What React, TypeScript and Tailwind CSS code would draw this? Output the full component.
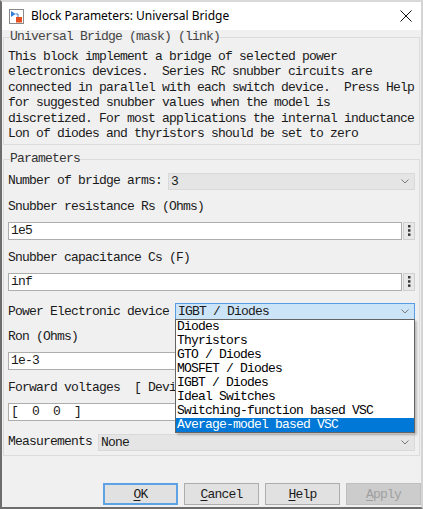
const DEVICES = [
  "Diodes",
  "Thyristors",
  "GTO / Diodes",
  "MOSFET / Diodes",
  "IGBT / Diodes",
  "Ideal Switches",
  "Switching-function based VSC",
  "Average-model based VSC",
];

const DESCRIPTION = [
  "This block implement a bridge of selected power",
  "electronics devices.  Series RC snubber circuits are",
  "connected in parallel with each switch device.  Press Help",
  "for suggested snubber values when the model is",
  "discretized. For most applications the internal inductance",
  "Lon of diodes and thyristors should be set to zero",
];

function Chevron() {
  return (
    <svg width="8" height="5" viewBox="0 0 8 5" className="shrink-0">
      <path d="M0.5 0.5 L4 4 L7.5 0.5" fill="none" stroke="#7a7a7a" strokeWidth="1" />
    </svg>
  );
}

function Combo({ value, focused = false, children }: { value: string; focused?: boolean; children?: React.ReactNode }) {
  return (
    <div
      className={`relative flex h-[17px] flex-1 items-center justify-between border pl-[2px] pr-[5px] ${
        focused ? "border-[#569de5] bg-[#cce4f7]" : "border-[#d9d9d9] bg-[#e5e5e5]"
      }`}
    >
      <span className="leading-[15px]">{value}</span>
      <Chevron />
      {children}
    </div>
  );
}

function Field({ value }: { value: string }) {
  return (
    <div className="mt-[7px] flex h-[18px] gap-[1px]">
      <div className="flex flex-1 items-center border border-[#adadad] bg-white pl-[2px] leading-[16px] whitespace-pre">
        {value}
      </div>
      <div className="flex w-[12px] items-center justify-center border border-[#d0d0d0] bg-[#e8e8e8]">
        <svg width="3" height="11" viewBox="0 0 3 11">
          <rect x="0" y="0" width="2.5" height="2.5" fill="#3a3a3a" />
          <rect x="0" y="4.2" width="2.5" height="2.5" fill="#3a3a3a" />
          <rect x="0" y="8.4" width="2.5" height="2.5" fill="#3a3a3a" />
        </svg>
      </div>
    </div>
  );
}

function Label({ text, gap, clip = false }: { text: string; gap: string; clip?: boolean }) {
  return (
    <div className={`${gap} h-[16px] overflow-hidden leading-[16px] whitespace-pre ${clip ? "w-[167px]" : ""}`}>
      {text}
    </div>
  );
}

function DeviceList() {
  return (
    <div className="absolute left-[-1px] right-[-1px] top-[15px] z-10 border border-[#646464] bg-white shadow-[2px_2px_2px_rgba(0,0,0,0.22)]">
      {DEVICES.map((d, i) => (
        <div
          key={d}
          className={`h-[14px] pl-[1px] leading-[14px] whitespace-pre ${
            i === DEVICES.length - 1 ? "bg-[#0078d7] text-white" : "text-black"
          }`}
        >
          {d}
        </div>
      ))}
    </div>
  );
}

function Button({ underline, rest, primary = false, disabled = false }: { underline: string; rest: string; primary?: boolean; disabled?: boolean }) {
  return (
    <div
      className={`flex h-[22px] w-[75px] items-center justify-center leading-none ${
        primary
          ? "border-2 border-[#5ea2e6] bg-[#e1e1e1]"
          : disabled
          ? "border border-[#bfbfbf] bg-[#cccccc] text-[#a0a0a0]"
          : "border border-[#adadad] bg-[#e1e1e1]"
      }`}
    >
      <span className="underline underline-offset-2">{underline}</span>
      <span>{rest}</span>
    </div>
  );
}

export default function App() {
  return (
    <div className="flex h-[509px] w-[423px] flex-col border-t-2 border-l-2 border-r-2 border-b-2 border-t-[#d9d9d9] border-l-[#6d6d6d] border-r-[#d4d4d4] border-b-[#6d6d6d] bg-[#f0f0f0] font-['Liberation_Mono','Noto_Sans_CJK_SC',monospace] text-[13px] tracking-[-0.8px] text-[#1a1a1a]">
      {/* title bar */}
      <div className="flex h-[28px] shrink-0 items-center bg-white pl-[7px] pr-[9px] font-['Noto_Sans','Liberation_Sans',sans-serif] tracking-normal">
        <svg width="15" height="15" viewBox="0 0 15 15" className="shrink-0">
          <rect x="0.5" y="0.5" width="14" height="14" fill="#fff" stroke="#8a8a8a" />
          <path d="M2 2 L2 8 L6.5 5 Z" fill="#2f7fd8" />
          <path d="M6.5 5 L9 5 L9 8" fill="none" stroke="#2f7fd8" strokeWidth="1" />
          <rect x="7" y="8" width="6" height="5.5" fill="#e4501f" />
        </svg>
        <span className="ml-[7px] text-[12px] text-black">Block Parameters: Universal Bridge</span>
        <svg width="12" height="12" viewBox="0 0 12 12" className="ml-auto">
          <path d="M0.5 0.5 L11.5 11.5 M11.5 0.5 L0.5 11.5" stroke="#111" strokeWidth="1" />
        </svg>
      </div>

      {/* mask description */}
      <fieldset className="mx-[1px] border border-[#dcdcdc] pb-[3px] pl-[4px] pr-[4px]">
        <legend className="ml-[2px] h-[14px] leading-[14px] text-[#444]">Universal Bridge (mask) (link)</legend>
        <div className="mt-[5px] leading-[15.4px]">
          {DESCRIPTION.map((line) => (
            <div key={line} className="whitespace-pre">{line}</div>
          ))}
        </div>
      </fieldset>

      {/* parameters */}
      <fieldset className="mx-[1px] mt-[7px] border border-[#dcdcdc] pb-[3px] pl-[4px] pr-[4px]">
        <legend className="ml-[2px] h-[14px] leading-[14px] text-[#333]">Parameters</legend>

        <div className="mt-[5px] flex items-center gap-[6px]">
          <span className="whitespace-pre">Number of bridge arms:</span>
          <Combo value="3" />
        </div>

        <Label text="Snubber resistance Rs (Ohms)" gap="mt-[8px]" />
        <Field value="1e5" />

        <Label text="Snubber capacitance Cs (F)" gap="mt-[10px]" />
        <Field value="inf" />

        <div className="mt-[11px] flex items-center gap-[6px]">
          <span className="whitespace-pre">Power Electronic device</span>
          <Combo value="IGBT / Diodes" focused>
            <DeviceList />
          </Combo>
        </div>

        <Label text="Ron (Ohms)" gap="mt-[8px]" />
        <Field value="1e-3" />

        <Label text="Forward voltages  [ Device Vf , Diode Vfd ] (V)" gap="mt-[10px]" clip />
        <Field value="[  0  0  ]" />

        <div className="mt-[11px] flex items-center gap-[6px]">
          <span className="whitespace-pre">Measurements</span>
          <Combo value="None" />
        </div>
      </fieldset>

      {/* buttons */}
      <div className="mt-auto flex justify-end gap-[6px]">
        <Button underline="O" rest="K" primary />
        <Button underline="C" rest="ancel" />
        <Button underline="H" rest="elp" />
        <Button underline="A" rest="pply" disabled />
      </div>
      <div className="h-[2px] shrink-0" />
    </div>
  );
}
